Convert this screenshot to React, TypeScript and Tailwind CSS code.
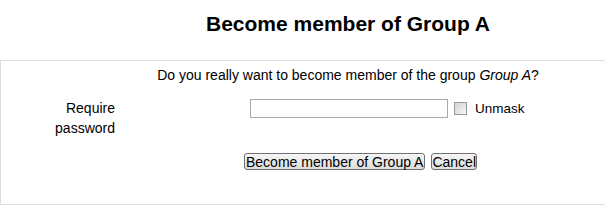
import React from 'react';

const buttonCls =
    'h-[17px] text-[14px] leading-[14px] border border-[#707070] rounded-[3px] bg-gradient-to-b from-[#f6f6f6] to-[#dddddd] text-black';

const App: React.FC = () => {
    return (
        <div className="w-[605px] h-[212px] bg-white overflow-hidden text-black" style={{ fontFamily: '"Liberation Sans", Arial, sans-serif' }}>
            <div className="w-[696px]">
                <h2 className="text-[21px] font-bold leading-[24px] text-center pt-[12px] h-[60px]">Become member of Group A</h2>

                {/* Confirm box */}
                <div className="h-[145px] border border-[#dedede]">
                    <p className="text-[14px] leading-[16px] text-center pt-[6px]">
                        Do you really want to become member of the group <em>Group A</em>?
                    </p>

                    <div className="flex items-start mt-[15px]">
                        <label className="w-[70px] ml-[44px] text-right text-[14px] leading-[20px]">Require password</label>
                        <div className="flex items-center ml-[135px] mt-[1px]">
                            <input
                                type="text"
                                className="w-[198px] h-[19px] border border-[#a9a9a9] outline-none bg-white"
                            />
                            <span className="ml-[6px] -mt-[1px] w-[13px] h-[13px] border border-[#9a9a9a] bg-gradient-to-br from-[#d2d2d2] to-[#f8f8f8]" />
                            <span className="ml-[8px] text-[13.5px] leading-[15px]">Unmask</span>
                        </div>
                    </div>

                    <div className="flex ml-[243px] mt-[15px] gap-[6px]">
                        <button className={`${buttonCls} px-[1px]`}>Become member of Group A</button>
                        <button className={`${buttonCls} px-0`}>Cancel</button>
                    </div>
                </div>
            </div>
        </div>
    );
};

export default App;
